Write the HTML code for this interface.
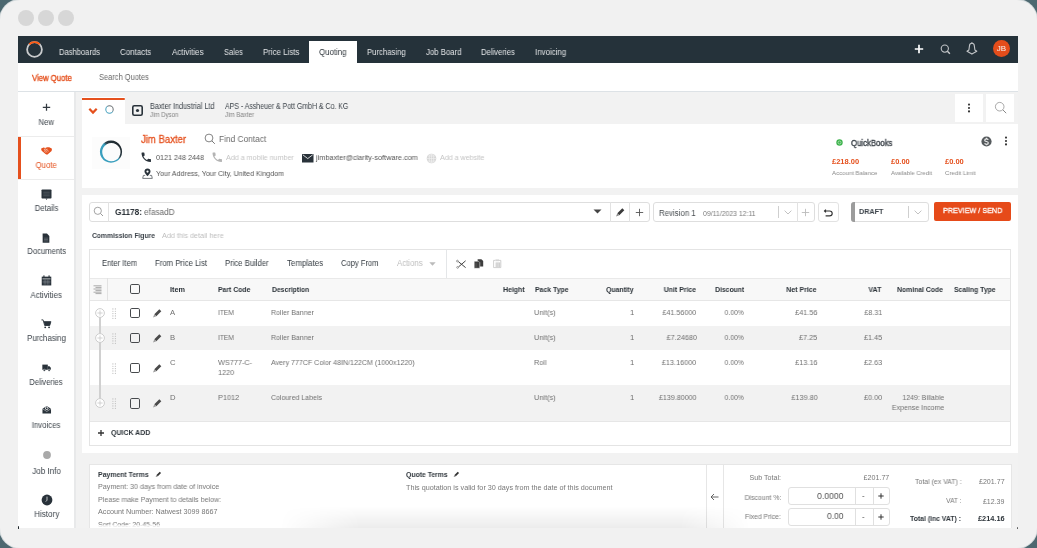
<!DOCTYPE html>
<html><head><meta charset="utf-8">
<style>
*{box-sizing:border-box;margin:0;padding:0}
html,body{width:1037px;height:548px;overflow:hidden;background:#4d6870;font-family:"Liberation Sans",sans-serif}
#frame{position:absolute;left:0;top:0;width:1037px;height:548px;background:#f1f1f1;border-radius:20px;overflow:hidden;box-shadow:0 0 0 1px rgba(255,255,255,0.75)}
.a{position:absolute}
.x{position:absolute;white-space:nowrap;will-change:transform}
.dot{position:absolute;width:16px;height:16px;border-radius:50%;background:#d7d7d7;top:10px}
.b{position:absolute;background:#fff}
svg{position:absolute;overflow:visible}
</style></head><body>
<div id="frame"><div id="clip" style="position:absolute;left:0;top:0;width:1037px;height:528px;overflow:hidden">
  <div class="dot" style="left:18px"></div>
  <div class="dot" style="left:38px"></div>
  <div class="dot" style="left:58px"></div>

  <!-- NAV -->
  <div class="a" style="left:18px;top:36px;width:1000px;height:27px;background:#25323a"></div>
  <svg style="left:24.5px;top:39.5px" width="19" height="19" viewBox="0 0 19 19">
    <circle cx="9.5" cy="9.5" r="7.4" fill="none" stroke="#c9cbcd" stroke-width="1.8"/>
    <path d="M4.3 4.3 A7.4 7.4 0 0 1 14.7 4.3" fill="none" stroke="#ff5a12" stroke-width="1.9"/>
  </svg>
  <div class="b" style="left:309px;top:41px;width:48px;height:22px"></div>
  <!-- + search bell avatar -->
  <svg style="left:912px;top:42px" width="14" height="14" viewBox="0 0 14 14">
    <path d="M7 2.8V11.2M2.8 7H11.2" stroke="#fff" stroke-width="1.7"/>
  </svg>
  <svg style="left:938px;top:41.6px" width="14" height="14" viewBox="0 0 14 14">
    <circle cx="6.8" cy="6.6" r="3.6" fill="none" stroke="#c2c5c8" stroke-width="1.1"/>
    <path d="M9.4 9.2L11.9 11.8" stroke="#c9cbcd" stroke-width="1.4"/>
  </svg>
  <svg style="left:965px;top:42px" width="14" height="14" viewBox="0 0 14 14">
    <path d="M6.9 1.3C8.5 1.3 9.2 2.4 9.3 3.6L9.9 8L11.8 9.3L6.9 12.1L2 9.3L3.9 8L4.5 3.6C4.6 2.4 5.3 1.3 6.9 1.3Z" fill="none" stroke="#c2c5c8" stroke-width="1.1" stroke-linejoin="round"/>
    <circle cx="6.9" cy="1.1" r="0.8" fill="#c2c5c8"/>
  </svg>
  <div class="a" style="left:993.2px;top:40.4px;width:16.8px;height:16.8px;border-radius:50%;background:#e44d1b"></div>
  <div class="x" style="left:993.4px;top:45.3px;width:17px;text-align:center;font-size:8px;line-height:8px;color:#f4f4f4;letter-spacing:0px">JB</div>

  <!-- SUBNAV -->
  <div class="b" style="left:18px;top:63px;width:1000px;height:28px"></div>
  <div class="a" style="left:18px;top:91px;width:1000px;height:1px;background:#dde2e6"></div>

  <!-- SIDEBAR -->
  <div class="b" style="left:18px;top:92px;width:56px;height:436px"></div>
  <div class="a" style="left:74px;top:92px;width:2px;height:436px;background:#e8e9ea"></div>
  <div class="a" style="left:18px;top:136px;width:56px;height:1px;background:#ececec"></div>
  <div class="a" style="left:18px;top:179px;width:56px;height:1px;background:#ececec"></div>
  <div class="a" style="left:18px;top:137px;width:3px;height:42px;background:#e5501d"></div>
  <!-- New plus -->
  <svg style="left:41px;top:101.5px" width="11" height="11" viewBox="0 0 11 11">
    <path d="M5.5 1.8V8.8M1.8 5.3H9.2" stroke="#333a40" stroke-width="1.25"/>
  </svg>

  <!-- MAIN -->
  <div class="a" style="left:76px;top:92px;width:942px;height:436px;background:#f2f2f2"></div>
  <!-- active tab -->
  <div class="b" style="left:82px;top:97px;width:42.5px;height:27px"></div>
  <div class="a" style="left:82px;top:97.5px;width:42.5px;height:2.2px;background:#e5501d;border-radius:0 1px 1px 0"></div>
  <svg style="left:88px;top:107.1px" width="10" height="8" viewBox="0 0 10 8">
    <path d="M1.3 1.8L5 5.6L8.7 1.8" fill="none" stroke="#e5501d" stroke-width="2.2"/>
  </svg>
  <svg style="left:104px;top:104.3px" width="11" height="11" viewBox="0 0 11 11">
    <defs><linearGradient id="tc" x1="0" y1="1" x2="1" y2="0"><stop offset="0.45" stop-color="#4aa3c0"/><stop offset="0.7" stop-color="#6f7478"/></linearGradient></defs>
    <circle cx="5.5" cy="5.5" r="3.7" fill="none" stroke="url(#tc)" stroke-width="1.05"/>
  </svg>
  <!-- company square icon -->
  <svg style="left:132.2px;top:104.5px" width="11" height="11" viewBox="0 0 11 11">
    <rect x="0.8" y="0.8" width="9.4" height="9.4" rx="1.5" fill="none" stroke="#29323a" stroke-width="1.6"/>
    <circle cx="5.5" cy="5.5" r="1.6" fill="#29323a"/>
  </svg>
  <!-- right buttons -->
  <div class="b" style="left:955px;top:94px;width:28px;height:28px"></div>
  <div class="b" style="left:986.2px;top:94px;width:28px;height:28px"></div>
  <svg style="left:964px;top:103px" width="10" height="10" viewBox="0 0 10 10">
    <circle cx="5" cy="1.6" r="1.05" fill="#333"/><circle cx="5" cy="5" r="1.05" fill="#333"/><circle cx="5" cy="8.4" r="1.05" fill="#333"/>
  </svg>
  <svg style="left:994px;top:101px" width="14" height="14" viewBox="0 0 14 14">
    <circle cx="5.7" cy="5.7" r="4.3" fill="none" stroke="#999" stroke-width="0.85"/>
    <path d="M8.8 8.8L12.2 12.2" stroke="#888" stroke-width="1"/>
  </svg>

  <!-- CONTACT CARD -->
  <div class="b" style="left:82px;top:124px;width:936px;height:64px"></div>
  <div class="a" style="left:92px;top:136.6px;width:37.6px;height:32.2px;background:#fcfcfc"></div>
  <svg style="left:98px;top:139px" width="26" height="26" viewBox="0 0 26 26">
    <defs><linearGradient id="av" x1="0.1" y1="0.9" x2="0.9" y2="0.1">
      <stop offset="0" stop-color="#3a9fbe"/><stop offset="0.5" stop-color="#3a9fbe"/><stop offset="0.62" stop-color="#2a3d46"/><stop offset="1" stop-color="#1c2226"/></linearGradient></defs>
    <path fill-rule="evenodd" fill="url(#av)" d="M13 1.6A11.1 11.1 0 1 1 12.99 1.6ZM13.35 3.95A9.15 9.15 0 1 0 13.36 3.95Z"/>
  </svg>
  <!-- find contact search -->
  <svg style="left:204px;top:133px" width="12" height="12" viewBox="0 0 12 12">
    <circle cx="5" cy="5" r="3.9" fill="none" stroke="#777" stroke-width="0.9"/>
    <path d="M7.8 7.8L10.8 10.8" stroke="#777" stroke-width="1"/>
  </svg>
  <!-- phone -->
  <svg style="left:141.3px;top:152.2px" width="11" height="11" viewBox="2 2 21 21">
    <path d="M6.6 10.8c1.4 2.8 3.8 5.1 6.6 6.6l2.2-2.2c.3-.3.7-.4 1-.2 1.1.4 2.3.6 3.6.6.6 0 1 .4 1 1V20c0 .6-.4 1-1 1C10.6 21 3 13.4 3 4c0-.6.4-1 1-1h3.5c.6 0 1 .4 1 1 0 1.3.2 2.5.6 3.6.1.3 0 .7-.2 1L6.6 10.8z" fill="#29323a"/>
  </svg>
  <svg style="left:211.5px;top:152.2px" width="11" height="11" viewBox="2 2 21 21">
    <path d="M6.6 10.8c1.4 2.8 3.8 5.1 6.6 6.6l2.2-2.2c.3-.3.7-.4 1-.2 1.1.4 2.3.6 3.6.6.6 0 1 .4 1 1V20c0 .6-.4 1-1 1C10.6 21 3 13.4 3 4c0-.6.4-1 1-1h3.5c.6 0 1 .4 1 1 0 1.3.2 2.5.6 3.6.1.3 0 .7-.2 1L6.6 10.8z" fill="#b4b4b4"/>
  </svg>
  <!-- mail -->
  <svg style="left:301.5px;top:153.5px" width="11.5" height="8.5" viewBox="0 0 11.5 8.5">
    <rect x="0" y="0" width="11.5" height="8.5" fill="#29323a"/>
    <path d="M0.8 0.8L5.75 4.6L10.7 0.8" fill="none" stroke="#fff" stroke-width="0.8"/>
  </svg>
  <!-- globe -->
  <svg style="left:425.5px;top:152.5px" width="11" height="11" viewBox="0 0 11 11">
    <circle cx="5.5" cy="5.5" r="4.8" fill="#d6d6d6"/>
    <path d="M0.7 5.5H10.3M5.5 0.7V10.3M1.5 3H9.5M1.5 8H9.5" stroke="#f4f4f4" stroke-width="0.6"/>
    <ellipse cx="5.5" cy="5.5" rx="2.2" ry="4.8" fill="none" stroke="#f4f4f4" stroke-width="0.6"/>
  </svg>
  <!-- location -->
  <svg style="left:141.5px;top:168px" width="11" height="11" viewBox="0 0 11 11">
    <path d="M5.5 0.6C3.7 0.6 2.5 1.9 2.5 3.6C2.5 5.6 5.5 8.2 5.5 8.2C5.5 8.2 8.5 5.6 8.5 3.6C8.5 1.9 7.3 0.6 5.5 0.6Z" fill="#29323a"/>
    <circle cx="5.5" cy="3.6" r="1.1" fill="#fff"/>
    <path d="M3.2 7.4H1.4L0.7 10.4H10.3L9.6 7.4H7.8" fill="none" stroke="#4a5056" stroke-width="0.75"/>
  </svg>
  <!-- QB -->
  <svg style="left:836px;top:138.5px" width="7" height="7" viewBox="0 0 7 7">
    <circle cx="3.5" cy="3.5" r="3.2" fill="#3bb24a"/>
    <circle cx="3.5" cy="3.5" r="1.5" fill="none" stroke="#d8f0d8" stroke-width="0.6"/>
  </svg>
  <svg style="left:980.5px;top:136px" width="11" height="11" viewBox="0 0 11 11">
    <circle cx="5.5" cy="5.5" r="5.1" fill="#555a5d"/>
    <path d="M7.3 3.8C6.9 3.1 6.3 2.8 5.5 2.8C4.4 2.8 3.7 3.4 3.7 4.2C3.7 6 7.3 5.1 7.3 6.9C7.3 7.8 6.5 8.3 5.5 8.3C4.6 8.3 3.9 7.9 3.6 7.2M5.5 1.7V2.9M5.5 8.2V9.3" fill="none" stroke="#ececec" stroke-width="1.15"/>
  </svg>
  <svg style="left:1001px;top:136px" width="10" height="10" viewBox="0 0 10 10">
    <circle cx="5" cy="1.6" r="1.05" fill="#333"/><circle cx="5" cy="5" r="1.05" fill="#333"/><circle cx="5" cy="8.4" r="1.05" fill="#333"/>
  </svg>

  <!-- QUOTE PANEL -->
  <div class="b" style="left:82px;top:194.5px;width:936px;height:258px"></div>
  <!-- search box -->
  <div class="a" style="left:88.5px;top:202px;width:561.2px;height:19.5px;border:1px solid #dedede;border-radius:3px"></div>
  <div class="a" style="left:108.3px;top:202px;width:1px;height:19.5px;background:#e2e2e2"></div>
  <div class="a" style="left:609.6px;top:202px;width:1px;height:19.5px;background:#e2e2e2"></div>
  <div class="a" style="left:629.3px;top:202px;width:1px;height:19.5px;background:#e2e2e2"></div>
  <svg style="left:93px;top:206px" width="11" height="11" viewBox="0 0 11 11">
    <circle cx="4.8" cy="4.8" r="3.6" fill="none" stroke="#999" stroke-width="0.9"/>
    <path d="M7.4 7.4L10 10" stroke="#999" stroke-width="1"/>
  </svg>
  <svg style="left:592.5px;top:209px" width="9" height="5" viewBox="0 0 9 5">
    <path d="M0.5 0.5H8.5L4.5 4.5Z" fill="#444"/>
  </svg>
  <svg style="left:615.3px;top:206.8px" width="10" height="10" viewBox="0 0 10 10">
    <path d="M2.3 6.2L7.3 1.2L9.3 3.2L4.3 8.2Z" fill="#3a3a3a"/>
    <path d="M2.3 6.2L4.3 8.2L1 9.4Z" fill="#8a8a8a"/>
  </svg>
  <svg style="left:634.5px;top:207.5px" width="9" height="9" viewBox="0 0 9 9">
    <path d="M4.5 0.8V8.2M0.8 4.5H8.2" stroke="#555" stroke-width="0.9"/>
  </svg>
  <!-- revision -->
  <div class="a" style="left:653.2px;top:202px;width:162.2px;height:19.5px;border:1px solid #dedede;border-radius:3px"></div>
  <div class="a" style="left:777.5px;top:206px;width:1px;height:11.5px;background:#cfcfcf"></div>
  <div class="a" style="left:797.3px;top:202px;width:1px;height:19.5px;background:#e2e2e2"></div>
  <svg style="left:783.5px;top:209.5px" width="8" height="5" viewBox="0 0 8 5">
    <path d="M0.6 0.6L4 4L7.4 0.6" fill="none" stroke="#bbb" stroke-width="0.9"/>
  </svg>
  <svg style="left:800.5px;top:207.5px" width="9" height="9" viewBox="0 0 9 9">
    <path d="M4.5 0.8V8.2M0.8 4.5H8.2" stroke="#bbb" stroke-width="0.9"/>
  </svg>
  <!-- undo -->
  <div class="a" style="left:818.3px;top:201.6px;width:20.6px;height:20.4px;border:1px solid #e2e2e2;border-radius:3px"></div>
  <svg style="left:823px;top:206.5px" width="11" height="11" viewBox="0 0 11 11">
    <path d="M2.9 2.6L1.5 4L2.9 5.4M1.6 4H6.6C8.2 4 9.2 5 9.2 6.5C9.2 8 8.2 8.9 6.6 8.9H2.6" fill="none" stroke="#333" stroke-width="1.15"/>
  </svg>
  <!-- draft -->
  <div class="a" style="left:850.7px;top:201.6px;width:78.2px;height:20.5px;border:1px solid #dedede;border-radius:3px"></div>
  <div class="a" style="left:850.7px;top:201.6px;width:4.3px;height:20.5px;background:#9c9c9c;border-radius:3px 0 0 3px"></div>
  <div class="a" style="left:907.5px;top:206px;width:1px;height:11.5px;background:#cfcfcf"></div>
  <svg style="left:914px;top:209.5px" width="8" height="5" viewBox="0 0 8 5">
    <path d="M0.6 0.6L4 4L7.4 0.6" fill="none" stroke="#bbb" stroke-width="0.9"/>
  </svg>
  <div class="a" style="left:933.5px;top:202px;width:77.6px;height:18.5px;background:#e64a19;border-radius:2px"></div>

  <!-- TABLE -->
  <div class="a" style="left:88.5px;top:249.3px;width:922.5px;height:197px;border:1px solid #e4e4e4"></div>
  <div class="a" style="left:445.8px;top:250px;width:1px;height:28px;background:#e4e6e8"></div>
  <svg style="left:429px;top:262px" width="7" height="4" viewBox="0 0 7 4">
    <path d="M0.3 0.3H6.7L3.5 3.7Z" fill="#bbb"/>
  </svg>
  <!-- scissors copy paste -->
  <svg style="left:455.8px;top:259.5px" width="10" height="8.5" viewBox="0 0 10 8.5">
    <path d="M2.3 1.6L9.6 7.6M2.5 6.9L9.6 0.8" stroke="#3a3a3a" stroke-width="0.95"/>
    <circle cx="1.4" cy="1.1" r="0.9" fill="none" stroke="#777" stroke-width="0.7"/>
    <circle cx="1.6" cy="7.4" r="0.9" fill="none" stroke="#777" stroke-width="0.7"/>
  </svg>
  <svg style="left:474.3px;top:259px" width="9.5" height="9.5" viewBox="0 0 9.5 9.5">
    <path d="M3.6 0.2H7.4L9.2 2V7.6H3.6Z" fill="#3d3d3d"/>
    <path d="M0.2 2.2H4.4L5.8 3.6V9.3H0.2Z" fill="#3d3d3d" stroke="#fff" stroke-width="0.5"/>
    <path d="M1.4 4.2V8.4M2.6 4.2V8.4" stroke="#666" stroke-width="0.4"/>
  </svg>
  <svg style="left:492.8px;top:259.3px" width="8.5" height="9" viewBox="0 0 8.5 9">
    <path d="M0.6 1.4H2.4M6 1.4H7.8V8.6H0.6V1.4" fill="none" stroke="#c4c4c4" stroke-width="0.8"/>
    <rect x="2.4" y="0.4" width="3.6" height="1.8" fill="#d4d4d4"/>
    <rect x="2.6" y="3.4" width="4.6" height="5" fill="#d0d0d0"/>
    <path d="M4 3.6V8.2M5.4 3.6V8.2" stroke="#eee" stroke-width="0.4"/>
  </svg>
  <!-- header -->
  <div class="a" style="left:89.5px;top:277.8px;width:920.5px;height:23.2px;background:#f8f8f8;border-top:1px solid #e9e9e9;border-bottom:1px solid #e6e6e6"></div>
  <div class="a" style="left:106.5px;top:278px;width:1px;height:22.5px;background:#e2e2e2"></div>
  <svg style="left:93px;top:285px" width="9" height="9" viewBox="0 0 9 9">
    <path d="M0.5 0.8H8.5M2.5 2.4H8.5M0.5 4H8.5M2.5 5.6H8.5M0.5 7.2H8.5M2.5 8.6H8.5" stroke="#6a6a6a" stroke-width="0.55"/>
  </svg>
  <div class="a" style="left:129.5px;top:283.8px;width:10.6px;height:10.4px;border:1.6px solid #474a4d;border-radius:1.8px"></div>
  <!-- rows -->
  <div class="a" style="left:89.5px;top:325.5px;width:920.5px;height:24.9px;background:#f2f2f2"></div>
  <div class="a" style="left:89.5px;top:385.4px;width:920.5px;height:35.9px;background:#f2f2f2"></div>
  <div class="a" style="left:89.5px;top:421.2px;width:920.5px;height:1px;background:#e6e6e6"></div>
  <div class="a" style="left:98.8px;top:313px;width:2px;height:90px;background:#d0d0d0"></div>
    <svg style="left:94.8px;top:308.0px" width="10" height="10" viewBox="0 0 10 10">
    <circle cx="5" cy="5" r="4.4" fill="#fff" stroke="#c8c8c8" stroke-width="0.9"/>
    <path d="M5 2.4V7.6M2.4 5H7.6" stroke="#c8c8c8" stroke-width="0.8"/>
  </svg>
  <svg style="left:112.4px;top:307.7px" width="5" height="11" viewBox="0 0 5 11"><circle cx="0.9" cy="0.90" r="0.62" fill="#bdbdbd"/><circle cx="3.4" cy="0.90" r="0.62" fill="#bdbdbd"/><circle cx="0.9" cy="3.25" r="0.62" fill="#bdbdbd"/><circle cx="3.4" cy="3.25" r="0.62" fill="#bdbdbd"/><circle cx="0.9" cy="5.60" r="0.62" fill="#bdbdbd"/><circle cx="3.4" cy="5.60" r="0.62" fill="#bdbdbd"/><circle cx="0.9" cy="7.95" r="0.62" fill="#bdbdbd"/><circle cx="3.4" cy="7.95" r="0.62" fill="#bdbdbd"/><circle cx="0.9" cy="10.30" r="0.62" fill="#bdbdbd"/><circle cx="3.4" cy="10.30" r="0.62" fill="#bdbdbd"/></svg>
  <div class="a" style="left:129.5px;top:307.9px;width:10.6px;height:10.4px;border:1.6px solid #474a4d;border-radius:1.8px"></div>
  <svg style="left:151.5px;top:308.0px" width="10" height="10" viewBox="0 0 10 10">
    <path d="M2.3 6.2L7.3 1.2L9.3 3.2L4.3 8.2Z" fill="#4a4a4a"/>
    <path d="M2.3 6.2L4.3 8.2L1 9.4Z" fill="#9a9a9a"/>
  </svg>
  <svg style="left:94.8px;top:332.9px" width="10" height="10" viewBox="0 0 10 10">
    <circle cx="5" cy="5" r="4.4" fill="#fff" stroke="#c8c8c8" stroke-width="0.9"/>
    <path d="M5 2.4V7.6M2.4 5H7.6" stroke="#c8c8c8" stroke-width="0.8"/>
  </svg>
  <svg style="left:112.4px;top:332.6px" width="5" height="11" viewBox="0 0 5 11"><circle cx="0.9" cy="0.90" r="0.62" fill="#bdbdbd"/><circle cx="3.4" cy="0.90" r="0.62" fill="#bdbdbd"/><circle cx="0.9" cy="3.25" r="0.62" fill="#bdbdbd"/><circle cx="3.4" cy="3.25" r="0.62" fill="#bdbdbd"/><circle cx="0.9" cy="5.60" r="0.62" fill="#bdbdbd"/><circle cx="3.4" cy="5.60" r="0.62" fill="#bdbdbd"/><circle cx="0.9" cy="7.95" r="0.62" fill="#bdbdbd"/><circle cx="3.4" cy="7.95" r="0.62" fill="#bdbdbd"/><circle cx="0.9" cy="10.30" r="0.62" fill="#bdbdbd"/><circle cx="3.4" cy="10.30" r="0.62" fill="#bdbdbd"/></svg>
  <div class="a" style="left:129.5px;top:332.8px;width:10.6px;height:10.4px;border:1.6px solid #474a4d;border-radius:1.8px"></div>
  <svg style="left:151.5px;top:332.9px" width="10" height="10" viewBox="0 0 10 10">
    <path d="M2.3 6.2L7.3 1.2L9.3 3.2L4.3 8.2Z" fill="#4a4a4a"/>
    <path d="M2.3 6.2L4.3 8.2L1 9.4Z" fill="#9a9a9a"/>
  </svg>
  <svg style="left:112.4px;top:362.6px" width="5" height="11" viewBox="0 0 5 11"><circle cx="0.9" cy="0.90" r="0.62" fill="#bdbdbd"/><circle cx="3.4" cy="0.90" r="0.62" fill="#bdbdbd"/><circle cx="0.9" cy="3.25" r="0.62" fill="#bdbdbd"/><circle cx="3.4" cy="3.25" r="0.62" fill="#bdbdbd"/><circle cx="0.9" cy="5.60" r="0.62" fill="#bdbdbd"/><circle cx="3.4" cy="5.60" r="0.62" fill="#bdbdbd"/><circle cx="0.9" cy="7.95" r="0.62" fill="#bdbdbd"/><circle cx="3.4" cy="7.95" r="0.62" fill="#bdbdbd"/><circle cx="0.9" cy="10.30" r="0.62" fill="#bdbdbd"/><circle cx="3.4" cy="10.30" r="0.62" fill="#bdbdbd"/></svg>
  <div class="a" style="left:129.5px;top:362.8px;width:10.6px;height:10.4px;border:1.6px solid #474a4d;border-radius:1.8px"></div>
  <svg style="left:151.5px;top:362.9px" width="10" height="10" viewBox="0 0 10 10">
    <path d="M2.3 6.2L7.3 1.2L9.3 3.2L4.3 8.2Z" fill="#4a4a4a"/>
    <path d="M2.3 6.2L4.3 8.2L1 9.4Z" fill="#9a9a9a"/>
  </svg>
  <svg style="left:94.8px;top:398.3px" width="10" height="10" viewBox="0 0 10 10">
    <circle cx="5" cy="5" r="4.4" fill="#fff" stroke="#c8c8c8" stroke-width="0.9"/>
    <path d="M5 2.4V7.6M2.4 5H7.6" stroke="#c8c8c8" stroke-width="0.8"/>
  </svg>
  <svg style="left:112.4px;top:398.0px" width="5" height="11" viewBox="0 0 5 11"><circle cx="0.9" cy="0.90" r="0.62" fill="#bdbdbd"/><circle cx="3.4" cy="0.90" r="0.62" fill="#bdbdbd"/><circle cx="0.9" cy="3.25" r="0.62" fill="#bdbdbd"/><circle cx="3.4" cy="3.25" r="0.62" fill="#bdbdbd"/><circle cx="0.9" cy="5.60" r="0.62" fill="#bdbdbd"/><circle cx="3.4" cy="5.60" r="0.62" fill="#bdbdbd"/><circle cx="0.9" cy="7.95" r="0.62" fill="#bdbdbd"/><circle cx="3.4" cy="7.95" r="0.62" fill="#bdbdbd"/><circle cx="0.9" cy="10.30" r="0.62" fill="#bdbdbd"/><circle cx="3.4" cy="10.30" r="0.62" fill="#bdbdbd"/></svg>
  <div class="a" style="left:129.5px;top:398.2px;width:10.6px;height:10.4px;border:1.6px solid #474a4d;border-radius:1.8px"></div>
  <svg style="left:151.5px;top:398.3px" width="10" height="10" viewBox="0 0 10 10">
    <path d="M2.3 6.2L7.3 1.2L9.3 3.2L4.3 8.2Z" fill="#4a4a4a"/>
    <path d="M2.3 6.2L4.3 8.2L1 9.4Z" fill="#9a9a9a"/>
  </svg>

  <svg style="left:98.2px;top:429.8px" width="6" height="6" viewBox="0 0 6 6">
    <path d="M3 0V6M0 3H6" stroke="#333" stroke-width="1.3"/>
  </svg>

  <!-- BOTTOM -->
  <div class="a" style="left:89px;top:463.5px;width:922.7px;height:70px;background:#fff;border:1px solid #e6e6e6"></div>
  <div class="a" style="left:706.3px;top:464px;width:1px;height:64px;background:#e6e6e6"></div>
  <div class="a" style="left:723.1px;top:464px;width:1px;height:64px;background:#e6e6e6"></div>
  <svg style="left:710px;top:492.5px" width="9" height="8" viewBox="0 0 9 8">
    <path d="M8.5 4H1.2M4 1L1 4L4 7" fill="none" stroke="#555" stroke-width="0.9"/>
  </svg>
  <svg style="left:154.5px;top:470.8px" width="6.5" height="6.5" viewBox="0 0 10 10">
    <path d="M2.3 6.2L7.3 1.2L9.3 3.2L4.3 8.2Z" fill="#333"/>
    <path d="M2.3 6.2L4.3 8.2L1 9.4Z" fill="#777"/>
  </svg>
  <svg style="left:453.2px;top:471px" width="6.5" height="6.5" viewBox="0 0 10 10">
    <path d="M2.3 6.2L7.3 1.2L9.3 3.2L4.3 8.2Z" fill="#333"/>
    <path d="M2.3 6.2L4.3 8.2L1 9.4Z" fill="#777"/>
  </svg>
  <div class="a" style="left:788.2px;top:486.8px;width:102.2px;height:17.8px;border:1px solid #e0e0e0;border-radius:3px"></div>
  <div class="a" style="left:855.3px;top:486.8px;width:1px;height:17.8px;background:#e0e0e0"></div>
  <div class="a" style="left:872.5px;top:486.8px;width:1px;height:17.8px;background:#e0e0e0"></div>
  <div class="a" style="left:788.2px;top:508px;width:102.2px;height:18px;border:1px solid #e0e0e0;border-radius:3px"></div>
  <div class="a" style="left:855.3px;top:508px;width:1px;height:18px;background:#e0e0e0"></div>
  <div class="a" style="left:872.5px;top:508px;width:1px;height:18px;background:#e0e0e0"></div>
  <div class="x" style="left:862.2px;top:491.6px;font-size:8px;line-height:8px;color:#444">-</div>
  <div class="x" style="left:862.2px;top:512.8px;font-size:8px;line-height:8px;color:#444">-</div>
  <svg style="left:877.5px;top:493px" width="6" height="6" viewBox="0 0 6 6"><path d="M3 0.3V5.7M0.3 3H5.7" stroke="#333" stroke-width="1"/></svg>
  <svg style="left:877.5px;top:514px" width="6" height="6" viewBox="0 0 6 6"><path d="M3 0.3V5.7M0.3 3H5.7" stroke="#333" stroke-width="1"/></svg>

  <!-- SIDEBAR ICONS -->
  
  <!-- handshake (Quote) -->
  <svg style="left:40.8px;top:147.3px" width="11" height="8" viewBox="0 0 11 8">
    <path d="M0 1.8L2.4 0.4L4.3 1.1L6.1 0.3H8.3L11 1.7L10.6 3.9L7.7 6.6L6.1 7.8L4.5 7.1L0.7 3.7Z" fill="#e5501d"/>
    <path d="M3.3 3.9L5.2 5.8M4.6 3.3L6.5 5.1M5.9 2.6L7.7 4.3" stroke="#fff" stroke-width="0.55"/>
    <path d="M4.4 1.2L3.1 2.8L4.1 3.3L6.3 2" fill="none" stroke="#fff" stroke-width="0.55"/>
  </svg>
  <!-- details -->
  <svg style="left:41px;top:188.5px" width="11" height="12" viewBox="0 0 11 12">
    <rect x="0.5" y="0.5" width="10" height="9" rx="0.8" fill="#29323a"/>
    <path d="M4.5 9.5L5.5 11L6.5 9.5Z" fill="#29323a"/>
    <path d="M2.3 3.2H8.7M2.3 5H8.7M2.3 6.8H8.7" stroke="#6e767c" stroke-width="0.5"/>
  </svg>
  <!-- documents -->
  <svg style="left:42.3px;top:233.3px" width="8" height="10.3" viewBox="0 0 9 12">
    <path d="M0.6 0.6H5.6L8.4 3.4V11.4H0.6Z" fill="#29323a"/>
    <path d="M2.2 6H6.8M2.2 7.6H6.8M2.2 9.2H6.8" stroke="#8d9397" stroke-width="0.5"/>
  </svg>
  <!-- activities (calendar) -->
  <svg style="left:40.8px;top:275px" width="11" height="11" viewBox="0 0 12 12">
    <rect x="0.8" y="1.8" width="10.4" height="9.6" fill="#29323a"/>
    <rect x="2.6" y="0.4" width="1.2" height="2.2" fill="#29323a"/><rect x="8.2" y="0.4" width="1.2" height="2.2" fill="#29323a"/>
    <path d="M1.6 4.2H10.4" stroke="#fff" stroke-width="0.7"/>
    <path d="M3.5 5V10.6M5.2 5V10.6M6.9 5V10.6M8.6 5V10.6M1.6 7.6H10.4" stroke="#9aa0a4" stroke-width="0.5"/>
  </svg>
  <!-- purchasing (cart) -->
  <svg style="left:41px;top:319px" width="10.5" height="10" viewBox="0 0 12 11">
    <path d="M0.5 0.8H2.4L4.2 7.2H10L11.3 2.8H3.2" fill="none" stroke="#29323a" stroke-width="1"/>
    <path d="M3.3 2.8H11.3L10 7.2H4.2Z" fill="#29323a"/>
    <circle cx="4.8" cy="9.3" r="1.05" fill="#29323a"/><circle cx="9.2" cy="9.3" r="1.05" fill="#29323a"/>
  </svg>
  <!-- deliveries (truck) -->
  <svg style="left:42.2px;top:364px" width="9.2" height="7.6" viewBox="0 0 12 10">
    <rect x="0.4" y="0.8" width="7.2" height="6.8" fill="#29323a"/>
    <path d="M7.6 2.8H9.8L11.6 5V7.6H7.6Z" fill="#29323a"/>
    <circle cx="3" cy="8.2" r="1.4" fill="#29323a" stroke="#fff" stroke-width="0.5"/><circle cx="9.3" cy="8.2" r="1.4" fill="#29323a" stroke="#fff" stroke-width="0.5"/>
  </svg>
  <!-- invoices (envelope with badge) -->
  <svg style="left:42.2px;top:405px" width="9.5" height="9" viewBox="0 0 12 11">
    <path d="M0.6 4.4L6 1L11.4 4.4V10.6H0.6Z" fill="#29323a"/>
    <path d="M0.8 4.6L6 8L11.2 4.6" fill="none" stroke="#fff" stroke-width="0.6"/>
    <circle cx="6" cy="3.8" r="2" fill="#fff"/><circle cx="6" cy="3.8" r="1.2" fill="#29323a"/>
  </svg>
  <!-- job info dot -->
  <svg style="left:41.5px;top:450.3px" width="10" height="10" viewBox="0 0 10 10">
    <circle cx="5" cy="5" r="3.9" fill="#a9a9a9"/>
  </svg>
  <!-- history clock -->
  <svg style="left:40.5px;top:494px" width="12" height="12" viewBox="0 0 12 12">
    <circle cx="6" cy="6" r="5.4" fill="#29323a"/>
    <path d="M6 2.6V6.2L4.8 7.6" fill="none" stroke="#fff" stroke-width="0.7"/>
  </svg>


<div class="x" style="left:59.00px;top:47.59px;font-size:8.600px;line-height:8.600px;color:#e4e6e8;transform:scaleX(0.8847);transform-origin:left center;">Dashboards</div>
<div class="x" style="left:120.20px;top:47.59px;font-size:8.600px;line-height:8.600px;color:#e4e6e8;transform:scaleX(0.9227);transform-origin:left center;">Contacts</div>
<div class="x" style="left:171.90px;top:47.59px;font-size:8.600px;line-height:8.600px;color:#e4e6e8;transform:scaleX(0.9320);transform-origin:left center;">Activities</div>
<div class="x" style="left:223.80px;top:47.59px;font-size:8.600px;line-height:8.600px;color:#e4e6e8;transform:scaleX(0.8744);transform-origin:left center;">Sales</div>
<div class="x" style="left:262.60px;top:47.59px;font-size:8.600px;line-height:8.600px;color:#e4e6e8;transform:scaleX(0.9182);transform-origin:left center;">Price Lists</div>
<div class="x" style="left:366.70px;top:47.59px;font-size:8.600px;line-height:8.600px;color:#e4e6e8;transform:scaleX(0.8977);transform-origin:left center;">Purchasing</div>
<div class="x" style="left:425.80px;top:47.59px;font-size:8.600px;line-height:8.600px;color:#e4e6e8;transform:scaleX(0.9033);transform-origin:left center;">Job Board</div>
<div class="x" style="left:481.40px;top:47.59px;font-size:8.600px;line-height:8.600px;color:#e4e6e8;transform:scaleX(0.8957);transform-origin:left center;">Deliveries</div>
<div class="x" style="left:535.40px;top:47.59px;font-size:8.600px;line-height:8.600px;color:#e4e6e8;transform:scaleX(0.9168);transform-origin:left center;">Invoicing</div>
<div class="x" style="left:318.90px;top:47.59px;font-size:8.600px;line-height:8.600px;color:#2b3238;transform:scaleX(0.9133);transform-origin:left center;">Quoting</div>
<div class="x" style="left:31.90px;top:73.68px;font-size:8.400px;line-height:8.400px;color:#e5501d;transform:scaleX(0.9222);transform-origin:left center;-webkit-text-stroke:0.35px #e5501d;">View Quote</div>
<div class="x" style="left:98.60px;top:73.78px;font-size:8.200px;line-height:8.200px;color:#666;transform:scaleX(0.9117);transform-origin:left center;">Search Quotes</div>
<div class="x" style="left:38.20px;top:119.08px;font-size:8.200px;line-height:8.200px;color:#3b4249;transform:scaleX(0.9335);transform-origin:center center;">New</div>
<div class="x" style="left:33.88px;top:205.18px;font-size:8.200px;line-height:8.200px;color:#3b4249;transform:scaleX(0.9388);transform-origin:center center;">Details</div>
<div class="x" style="left:25.69px;top:248.48px;font-size:8.200px;line-height:8.200px;color:#3b4249;transform:scaleX(0.9367);transform-origin:center center;">Documents</div>
<div class="x" style="left:30.24px;top:292.18px;font-size:8.200px;line-height:8.200px;color:#3b4249;transform:scaleX(0.9718);transform-origin:center center;">Activities</div>
<div class="x" style="left:25.92px;top:335.48px;font-size:8.200px;line-height:8.200px;color:#3b4249;transform:scaleX(0.9471);transform-origin:center center;">Purchasing</div>
<div class="x" style="left:28.42px;top:378.68px;font-size:8.200px;line-height:8.200px;color:#3b4249;transform:scaleX(0.9262);transform-origin:center center;">Deliveries</div>
<div class="x" style="left:31.38px;top:421.88px;font-size:8.200px;line-height:8.200px;color:#3b4249;transform:scaleX(0.9485);transform-origin:center center;">Invoices</div>
<div class="x" style="left:31.83px;top:468.38px;font-size:8.200px;line-height:8.200px;color:#3b4249;transform:scaleX(0.9780);transform-origin:center center;">Job Info</div>
<div class="x" style="left:33.66px;top:510.68px;font-size:8.200px;line-height:8.200px;color:#3b4249;transform:scaleX(0.9810);transform-origin:center center;">History</div>
<div class="x" style="left:35.04px;top:162.38px;font-size:8.200px;line-height:8.200px;color:#e5501d;transform:scaleX(0.9501);transform-origin:center center;">Quote</div>
<div class="x" style="left:149.50px;top:102.98px;font-size:8.200px;line-height:8.200px;color:#3b4249;transform:scaleX(0.8856);transform-origin:left center;">Baxter Industrial Ltd</div>
<div class="x" style="left:149.50px;top:112.02px;font-size:6.900px;line-height:6.900px;color:#838383;transform:scaleX(0.8828);transform-origin:left center;">Jim Dyson</div>
<div class="x" style="left:225.30px;top:102.98px;font-size:8.200px;line-height:8.200px;color:#3b4249;transform:scaleX(0.8494);transform-origin:left center;">APS - Assheuer &amp; Pott GmbH &amp; Co. KG</div>
<div class="x" style="left:225.30px;top:112.02px;font-size:6.900px;line-height:6.900px;color:#838383;transform:scaleX(0.8910);transform-origin:left center;">Jim Baxter</div>
<div class="x" style="left:140.90px;top:134.80px;font-size:10.200px;line-height:10.200px;color:#e5501d;transform:scaleX(0.9371);transform-origin:left center;-webkit-text-stroke:0.3px #e5501d;">Jim Baxter</div>
<div class="x" style="left:219.40px;top:135.39px;font-size:9.000px;line-height:9.000px;color:#6a6a6a;transform:scaleX(0.9269);transform-origin:left center;">Find Contact</div>
<div class="x" style="left:156.00px;top:154.27px;font-size:7.400px;line-height:7.400px;color:#555;transform:scaleX(0.9731);transform-origin:left center;">0121 248 2448</div>
<div class="x" style="left:226.00px;top:154.27px;font-size:7.400px;line-height:7.400px;color:#c4c4c4;transform:scaleX(0.9649);transform-origin:left center;">Add a mobile number</div>
<div class="x" style="left:316.30px;top:154.27px;font-size:7.400px;line-height:7.400px;color:#555;transform:scaleX(0.9854);transform-origin:left center;">jimbaxter@clarity-software.com</div>
<div class="x" style="left:440.30px;top:154.27px;font-size:7.400px;line-height:7.400px;color:#c4c4c4;transform:scaleX(0.9583);transform-origin:left center;">Add a website</div>
<div class="x" style="left:156.00px;top:169.87px;font-size:7.400px;line-height:7.400px;color:#555;transform:scaleX(0.9586);transform-origin:left center;">Your Address, Your City, United Kingdom</div>
<div class="x" style="left:850.80px;top:138.73px;font-size:8.300px;line-height:8.300px;color:#3b4249;transform:scaleX(0.9372);transform-origin:left center;-webkit-text-stroke:0.35px #3b4249;">QuickBooks</div>
<div class="x" style="left:831.70px;top:157.82px;font-size:7.500px;line-height:7.500px;color:#e5501d;font-weight:bold;transform:scaleX(0.9880);transform-origin:left center;">£218.00</div>
<div class="x" style="left:831.70px;top:169.96px;font-size:6.200px;line-height:6.200px;color:#8a8a8a;transform:scaleX(0.9777);transform-origin:left center;">Account Balance</div>
<div class="x" style="left:890.50px;top:157.82px;font-size:7.500px;line-height:7.500px;color:#e5501d;font-weight:bold;transform:scaleX(0.9903);transform-origin:left center;">£0.00</div>
<div class="x" style="left:890.50px;top:169.96px;font-size:6.200px;line-height:6.200px;color:#8a8a8a;transform:scaleX(0.9460);transform-origin:left center;">Available Credit</div>
<div class="x" style="left:945.20px;top:157.82px;font-size:7.500px;line-height:7.500px;color:#e5501d;font-weight:bold;transform:scaleX(0.9903);transform-origin:left center;">£0.00</div>
<div class="x" style="left:945.20px;top:169.96px;font-size:6.200px;line-height:6.200px;color:#8a8a8a;transform:scaleX(0.9809);transform-origin:left center;">Credit Limit</div>
<div class="x" style="left:115.40px;top:207.79px;font-size:8.600px;line-height:8.600px;color:#2b3238;font-weight:bold;transform:scaleX(0.9573);transform-origin:left center;">G1178:</div>
<div class="x" style="left:144.40px;top:207.79px;font-size:8.600px;line-height:8.600px;color:#6a6a6a;transform:scaleX(0.9558);transform-origin:left center;">efasadD</div>
<div class="x" style="left:91.90px;top:232.37px;font-size:7.400px;line-height:7.400px;color:#3b4249;font-weight:bold;transform:scaleX(0.9116);transform-origin:left center;">Commission Figure</div>
<div class="x" style="left:161.70px;top:232.37px;font-size:7.400px;line-height:7.400px;color:#bdbdbd;transform:scaleX(0.9750);transform-origin:left center;">Add this detail here</div>
<div class="x" style="left:658.50px;top:208.73px;font-size:8.300px;line-height:8.300px;color:#454a4e;transform:scaleX(0.9497);transform-origin:left center;">Revision 1</div>
<div class="x" style="left:702.90px;top:209.57px;font-size:7.000px;line-height:7.000px;color:#7a7a7a;transform:scaleX(0.9838);transform-origin:left center;">09/11/2023 12:11</div>
<div class="x" style="left:858.80px;top:207.68px;font-size:7.600px;line-height:7.600px;color:#3b4249;font-weight:bold;transform:scaleX(0.9481);transform-origin:left center;">DRAFT</div>
<div class="x" style="left:942.60px;top:206.78px;font-size:7.800px;line-height:7.800px;color:#ffffff;transform:scaleX(0.9263);transform-origin:left center;-webkit-text-stroke:0.3px #fff;">PREVIEW / SEND</div>
<div class="x" style="left:101.80px;top:259.78px;font-size:8.200px;line-height:8.200px;color:#333a40;transform:scaleX(0.9317);transform-origin:left center;">Enter Item</div>
<div class="x" style="left:154.80px;top:259.78px;font-size:8.200px;line-height:8.200px;color:#333a40;transform:scaleX(0.9465);transform-origin:left center;">From Price List</div>
<div class="x" style="left:225.20px;top:259.78px;font-size:8.200px;line-height:8.200px;color:#333a40;transform:scaleX(0.9392);transform-origin:left center;">Price Builder</div>
<div class="x" style="left:286.90px;top:259.78px;font-size:8.200px;line-height:8.200px;color:#333a40;transform:scaleX(0.9671);transform-origin:left center;">Templates</div>
<div class="x" style="left:341.10px;top:259.78px;font-size:8.200px;line-height:8.200px;color:#333a40;transform:scaleX(0.9235);transform-origin:left center;">Copy From</div>
<div class="x" style="left:397.00px;top:259.78px;font-size:8.200px;line-height:8.200px;color:#bdbdbd;transform:scaleX(0.9531);transform-origin:left center;">Actions</div>
<div class="x" style="left:170.00px;top:285.72px;font-size:7.300px;line-height:7.300px;color:#2b3238;font-weight:bold;transform:scaleX(0.9923);transform-origin:left center;">Item</div>
<div class="x" style="left:218.00px;top:285.72px;font-size:7.300px;line-height:7.300px;color:#2b3238;font-weight:bold;transform:scaleX(0.9371);transform-origin:left center;">Part Code</div>
<div class="x" style="left:271.80px;top:285.72px;font-size:7.300px;line-height:7.300px;color:#2b3238;font-weight:bold;transform:scaleX(0.9267);transform-origin:left center;">Description</div>
<div class="x" style="left:503.00px;top:285.72px;font-size:7.300px;line-height:7.300px;color:#2b3238;font-weight:bold;transform:scaleX(0.9558);transform-origin:left center;">Height</div>
<div class="x" style="left:534.60px;top:285.72px;font-size:7.300px;line-height:7.300px;color:#2b3238;font-weight:bold;transform:scaleX(0.9448);transform-origin:left center;">Pack Type</div>
<div class="x" style="left:604.41px;top:285.72px;font-size:7.300px;line-height:7.300px;color:#2b3238;font-weight:bold;transform:scaleX(0.9293);transform-origin:right center;">Quantity</div>
<div class="x" style="left:662.24px;top:285.72px;font-size:7.300px;line-height:7.300px;color:#2b3238;font-weight:bold;transform:scaleX(0.9483);transform-origin:right center;">Unit Price</div>
<div class="x" style="left:712.68px;top:285.72px;font-size:7.300px;line-height:7.300px;color:#2b3238;font-weight:bold;transform:scaleX(0.9321);transform-origin:right center;">Discount</div>
<div class="x" style="left:785.26px;top:285.72px;font-size:7.300px;line-height:7.300px;color:#2b3238;font-weight:bold;transform:scaleX(0.9608);transform-origin:right center;">Net Price</div>
<div class="x" style="left:867.88px;top:285.72px;font-size:7.300px;line-height:7.300px;color:#2b3238;font-weight:bold;transform:scaleX(0.9692);transform-origin:right center;">VAT</div>
<div class="x" style="left:897.40px;top:285.72px;font-size:7.300px;line-height:7.300px;color:#2b3238;font-weight:bold;transform:scaleX(0.9376);transform-origin:left center;">Nominal Code</div>
<div class="x" style="left:953.60px;top:285.72px;font-size:7.300px;line-height:7.300px;color:#2b3238;font-weight:bold;transform:scaleX(0.9332);transform-origin:left center;">Scaling Type</div>
<div class="x" style="left:169.70px;top:309.03px;font-size:7.700px;line-height:7.700px;color:#707070;">A</div>
<div class="x" style="left:217.90px;top:309.03px;font-size:7.700px;line-height:7.700px;color:#707070;transform:scaleX(0.8653);transform-origin:left center;">ITEM</div>
<div class="x" style="left:271.10px;top:309.03px;font-size:7.700px;line-height:7.700px;color:#707070;transform:scaleX(0.9103);transform-origin:left center;">Roller Banner</div>
<div class="x" style="left:533.70px;top:309.03px;font-size:7.700px;line-height:7.700px;color:#707070;transform:scaleX(0.9585);transform-origin:left center;">Unit(s)</div>
<div class="x" style="left:629.72px;top:309.03px;font-size:7.700px;line-height:7.700px;color:#707070;">1</div>
<div class="x" style="left:660.26px;top:309.03px;font-size:7.700px;line-height:7.700px;color:#707070;transform:scaleX(0.9328);transform-origin:right center;">£41.56000</div>
<div class="x" style="left:722.09px;top:309.03px;font-size:7.700px;line-height:7.700px;color:#707070;transform:scaleX(0.8802);transform-origin:right center;">0.00%</div>
<div class="x" style="left:793.98px;top:309.03px;font-size:7.700px;line-height:7.700px;color:#707070;transform:scaleX(0.9526);transform-origin:right center;">£41.56</div>
<div class="x" style="left:862.75px;top:309.03px;font-size:7.700px;line-height:7.700px;color:#707070;transform:scaleX(0.9299);transform-origin:right center;">£8.31</div>
<div class="x" style="left:169.70px;top:333.93px;font-size:7.700px;line-height:7.700px;color:#707070;">B</div>
<div class="x" style="left:217.90px;top:333.93px;font-size:7.700px;line-height:7.700px;color:#707070;transform:scaleX(0.8653);transform-origin:left center;">ITEM</div>
<div class="x" style="left:271.10px;top:333.93px;font-size:7.700px;line-height:7.700px;color:#707070;transform:scaleX(0.9103);transform-origin:left center;">Roller Banner</div>
<div class="x" style="left:533.70px;top:333.93px;font-size:7.700px;line-height:7.700px;color:#707070;transform:scaleX(0.9585);transform-origin:left center;">Unit(s)</div>
<div class="x" style="left:629.72px;top:333.93px;font-size:7.700px;line-height:7.700px;color:#707070;">1</div>
<div class="x" style="left:664.52px;top:333.93px;font-size:7.700px;line-height:7.700px;color:#707070;transform:scaleX(0.9500);transform-origin:right center;">£7.24680</div>
<div class="x" style="left:722.09px;top:333.93px;font-size:7.700px;line-height:7.700px;color:#707070;transform:scaleX(0.8802);transform-origin:right center;">0.00%</div>
<div class="x" style="left:798.25px;top:333.93px;font-size:7.700px;line-height:7.700px;color:#707070;transform:scaleX(0.9500);transform-origin:right center;">£7.25</div>
<div class="x" style="left:862.75px;top:333.93px;font-size:7.700px;line-height:7.700px;color:#707070;transform:scaleX(0.9500);transform-origin:right center;">£1.45</div>
<div class="x" style="left:169.70px;top:359.13px;font-size:7.700px;line-height:7.700px;color:#707070;">C</div>
<div class="x" style="left:217.90px;top:359.13px;font-size:7.700px;line-height:7.700px;color:#707070;transform:scaleX(0.9500);transform-origin:left center;">WS777-C-</div>
<div class="x" style="left:271.10px;top:359.13px;font-size:7.700px;line-height:7.700px;color:#707070;transform:scaleX(0.9222);transform-origin:left center;">Avery 777CF Color 48IN/122CM (1000x1220)</div>
<div class="x" style="left:533.70px;top:359.13px;font-size:7.700px;line-height:7.700px;color:#707070;transform:scaleX(0.9500);transform-origin:left center;">Roll</div>
<div class="x" style="left:629.72px;top:359.13px;font-size:7.700px;line-height:7.700px;color:#707070;">1</div>
<div class="x" style="left:660.26px;top:359.13px;font-size:7.700px;line-height:7.700px;color:#707070;transform:scaleX(0.9500);transform-origin:right center;">£13.16000</div>
<div class="x" style="left:722.09px;top:359.13px;font-size:7.700px;line-height:7.700px;color:#707070;transform:scaleX(0.8802);transform-origin:right center;">0.00%</div>
<div class="x" style="left:793.98px;top:359.13px;font-size:7.700px;line-height:7.700px;color:#707070;transform:scaleX(0.9500);transform-origin:right center;">£13.16</div>
<div class="x" style="left:862.75px;top:359.13px;font-size:7.700px;line-height:7.700px;color:#707070;transform:scaleX(0.9500);transform-origin:right center;">£2.63</div>
<div class="x" style="left:169.70px;top:394.03px;font-size:7.700px;line-height:7.700px;color:#707070;">D</div>
<div class="x" style="left:217.90px;top:394.03px;font-size:7.700px;line-height:7.700px;color:#707070;transform:scaleX(0.9500);transform-origin:left center;">P1012</div>
<div class="x" style="left:271.10px;top:394.03px;font-size:7.700px;line-height:7.700px;color:#707070;transform:scaleX(0.9089);transform-origin:left center;">Coloured Labels</div>
<div class="x" style="left:533.70px;top:394.03px;font-size:7.700px;line-height:7.700px;color:#707070;transform:scaleX(0.9585);transform-origin:left center;">Unit(s)</div>
<div class="x" style="left:629.72px;top:394.03px;font-size:7.700px;line-height:7.700px;color:#707070;">1</div>
<div class="x" style="left:655.98px;top:394.03px;font-size:7.700px;line-height:7.700px;color:#707070;transform:scaleX(0.9280);transform-origin:right center;">£139.80000</div>
<div class="x" style="left:722.09px;top:394.03px;font-size:7.700px;line-height:7.700px;color:#707070;transform:scaleX(0.8802);transform-origin:right center;">0.00%</div>
<div class="x" style="left:789.70px;top:394.03px;font-size:7.700px;line-height:7.700px;color:#707070;transform:scaleX(0.9500);transform-origin:right center;">£139.80</div>
<div class="x" style="left:862.75px;top:394.03px;font-size:7.700px;line-height:7.700px;color:#707070;transform:scaleX(0.9500);transform-origin:right center;">£0.00</div>
<div class="x" style="left:217.90px;top:369.13px;font-size:7.700px;line-height:7.700px;color:#707070;transform:scaleX(0.9500);transform-origin:left center;">1220</div>
<div class="x" style="left:897.83px;top:394.03px;font-size:7.700px;line-height:7.700px;color:#707070;transform:scaleX(0.9053);transform-origin:right center;">1249: Billable</div>
<div class="x" style="left:886.73px;top:404.23px;font-size:7.700px;line-height:7.700px;color:#707070;transform:scaleX(0.9150);transform-origin:right center;">Expense Income</div>
<div class="x" style="left:111.30px;top:428.57px;font-size:7.400px;line-height:7.400px;color:#2b3238;font-weight:bold;transform:scaleX(0.9445);transform-origin:left center;">QUICK ADD</div>
<div class="x" style="left:98.00px;top:470.77px;font-size:7.000px;line-height:7.000px;color:#2f363c;font-weight:bold;transform:scaleX(0.9840);transform-origin:left center;">Payment Terms</div>
<div class="x" style="left:98.00px;top:483.17px;font-size:7.200px;line-height:7.200px;color:#777;transform:scaleX(0.9913);transform-origin:left center;">Payment: 30 days from date of invoice</div>
<div class="x" style="left:98.00px;top:495.87px;font-size:7.200px;line-height:7.200px;color:#777;transform:scaleX(0.9804);transform-origin:left center;">Please make Payment to details below:</div>
<div class="x" style="left:98.00px;top:508.37px;font-size:7.200px;line-height:7.200px;color:#777;">Account Number: Natwest 3099 8667</div>
<div class="x" style="left:98.00px;top:520.97px;font-size:7.200px;line-height:7.200px;color:#777;transform:scaleX(0.9500);transform-origin:left center;">Sort Code: 20-45-56</div>
<div class="x" style="left:406.10px;top:470.97px;font-size:7.000px;line-height:7.000px;color:#2f363c;font-weight:bold;transform:scaleX(0.9776);transform-origin:left center;">Quote Terms</div>
<div class="x" style="left:406.10px;top:483.67px;font-size:7.200px;line-height:7.200px;color:#777;transform:scaleX(1.0036);transform-origin:left center;">This quotation is valid for 30 days from the date of this document</div>
<div class="x" style="left:750.08px;top:474.37px;font-size:7.000px;line-height:7.000px;color:#777;transform:scaleX(1.0124);transform-origin:right center;">Sub Total:</div>
<div class="x" style="left:864.19px;top:474.37px;font-size:7.000px;line-height:7.000px;color:#777;transform:scaleX(1.0153);transform-origin:right center;">£201.77</div>
<div class="x" style="left:743.74px;top:493.67px;font-size:7.000px;line-height:7.000px;color:#777;transform:scaleX(0.9824);transform-origin:right center;">Discount %:</div>
<div class="x" style="left:744.13px;top:512.87px;font-size:7.000px;line-height:7.000px;color:#777;transform:scaleX(0.9738);transform-origin:right center;">Fixed Price:</div>
<div class="x" style="left:815.97px;top:491.59px;font-size:9.000px;line-height:9.000px;color:#555;transform:scaleX(0.9625);transform-origin:right center;">0.0000</div>
<div class="x" style="left:825.97px;top:512.49px;font-size:9.000px;line-height:9.000px;color:#555;transform:scaleX(0.9469);transform-origin:right center;">0.00</div>
<div class="x" style="left:914.50px;top:477.97px;font-size:7.000px;line-height:7.000px;color:#777;transform:scaleX(0.9872);transform-origin:left center;">Total (ex VAT) :</div>
<div class="x" style="left:978.60px;top:477.97px;font-size:7.000px;line-height:7.000px;color:#777;transform:scaleX(1.0114);transform-origin:left center;">£201.77</div>
<div class="x" style="left:944.76px;top:497.17px;font-size:7.000px;line-height:7.000px;color:#777;transform:scaleX(0.9300);transform-origin:right center;">VAT :</div>
<div class="x" style="left:982.78px;top:497.97px;font-size:7.000px;line-height:7.000px;color:#777;transform:scaleX(1.0036);transform-origin:right center;">£12.39</div>
<div class="x" style="left:910.00px;top:514.67px;font-size:7.000px;line-height:7.000px;color:#2b3238;font-weight:bold;transform:scaleX(0.9787);transform-origin:left center;">Total (inc VAT) :</div>
<div class="x" style="left:977.60px;top:514.52px;font-size:7.300px;line-height:7.300px;color:#2b3238;font-weight:bold;transform:scaleX(1.0079);transform-origin:left center;">£214.16</div>
  <div class="a" style="left:90px;top:524.8px;width:300px;height:3.2px;background:linear-gradient(to bottom,rgba(255,255,255,0.6),#fff)"></div>
  <div class="a" style="left:280px;top:506px;width:470px;height:22px;background:linear-gradient(to bottom,rgba(0,0,0,0),rgba(0,0,0,0.075));-webkit-mask-image:linear-gradient(to right,transparent 0,#000 80px,#000 400px,transparent 470px)"></div>
</div>
  <div class="a" style="left:18px;top:526px;width:1.2px;height:2.6px;background:#1c2429;border-radius:0.6px"></div>
  <div class="a" style="left:1017px;top:527px;width:1.1px;height:1.8px;background:#555;border-radius:0.5px"></div>
</div>
</body></html>
